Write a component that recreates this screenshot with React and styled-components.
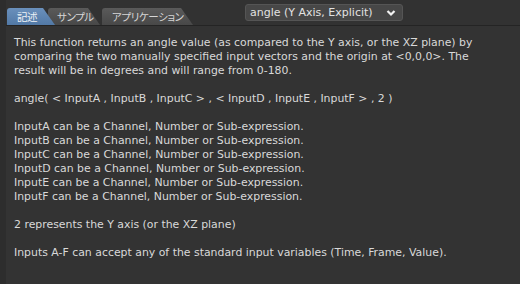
import React from 'react';
import styled, { createGlobalStyle } from 'styled-components';

const Global = createGlobalStyle`
  html, body { margin: 0; padding: 0; background: #333333; }
  body { width: 520px; height: 284px; overflow: hidden; }
`;

const Page = styled.div`
  width: 520px;
  height: 284px;
  display: flex;
  flex-direction: column;
  background: #333333;
  border-left: 6px solid #2d2d2d;
  box-sizing: border-box;
  font-family: "DejaVu Sans", Verdana, sans-serif;
`;

const TabBar = styled.div`
  height: 25px;
  display: flex;
  align-items: flex-end;
  padding-left: 1px;
  border-bottom: 1px solid #242424;
  background: #323232;
  flex-shrink: 0;
`;

const Tab = styled.div`
  position: relative;
  z-index: ${(p) => p.z};
  width: ${(p) => p.w}px;
  height: 17px;
  margin-left: ${(p) => p.ml}px;
  padding-left: ${(p) => p.pl}px;
  box-sizing: border-box;
  display: flex;
  align-items: center;
  white-space: nowrap;
  overflow: hidden;
  border-top-left-radius: 3px;
  clip-path: polygon(0 0, calc(100% - 12px) 0, 100% 100%, 0 100%);
  background: ${(p) => (p.active ? 'linear-gradient(#6a90bc, #5279a6)' : 'linear-gradient(#5a5a5a, #484848)')};
  color: ${(p) => (p.active ? '#eef2f6' : '#d6d6d6')};
  font-family: "Noto Sans CJK JP", sans-serif;
  font-feature-settings: "palt";
  font-size: 10.5px;
  letter-spacing: -0.4px;
  line-height: 17px;
`;

const Select = styled.div`
  margin-left: 52px;
  align-self: flex-start;
  margin-top: 4px;
  width: 158px;
  height: 17px;
  box-sizing: border-box;
  border: 1px solid #555555;
  border-radius: 3px;
  background: #474747;
  display: flex;
  align-items: center;
  justify-content: space-between;
  padding: 0 6px 0 4px;
  color: #e2e2e2;
  font-size: 11px;
`;

const Body = styled.div`
  padding: 10px 8px 0 8px;
  color: #d9d9d9;
  font-size: 10.9px;
  line-height: 14px;
  white-space: pre;
`;

const Para = styled.p`
  margin: 0 0 14px 0;
`;

const Chevron = () => (
  <svg width="10" height="8" viewBox="0 0 10 8">
    <path d="M1.5 2 L5 5.5 L8.5 2" fill="none" stroke="#f2f2f2" strokeWidth="2.2" />
  </svg>
);

export default function App() {
  return (
    <>
      <Global />
      <Page>
        <TabBar>
          <Tab active z={3} w={48} ml={0} pl={10}>記述</Tab>
          <Tab z={2} w={52} ml={-7} pl={9}>サンプル</Tab>
          <Tab z={1} w={91} ml={2} pl={10}>アプリケーション</Tab>
          <Select>
            <span>angle (Y Axis, Explicit)</span>
            <Chevron />
          </Select>
        </TabBar>
        <Body>
          <Para>{'This function returns an angle value (as compared to the Y axis, or the XZ plane) by\ncomparing the two manually specified input vectors and the origin at <0,0,0>. The\nresult will be in degrees and will range from 0-180.'}</Para>
          <Para>{'angle( < InputA , InputB , InputC > , < InputD , InputE , InputF > , 2 )'}</Para>
          <Para>{'InputA can be a Channel, Number or Sub-expression.\nInputB can be a Channel, Number or Sub-expression.\nInputC can be a Channel, Number or Sub-expression.\nInputD can be a Channel, Number or Sub-expression.\nInputE can be a Channel, Number or Sub-expression.\nInputF can be a Channel, Number or Sub-expression.'}</Para>
          <Para>{'2 represents the Y axis (or the XZ plane)'}</Para>
          <Para>{'Inputs A-F can accept any of the standard input variables (Time, Frame, Value).'}</Para>
        </Body>
      </Page>
    </>
  );
}
